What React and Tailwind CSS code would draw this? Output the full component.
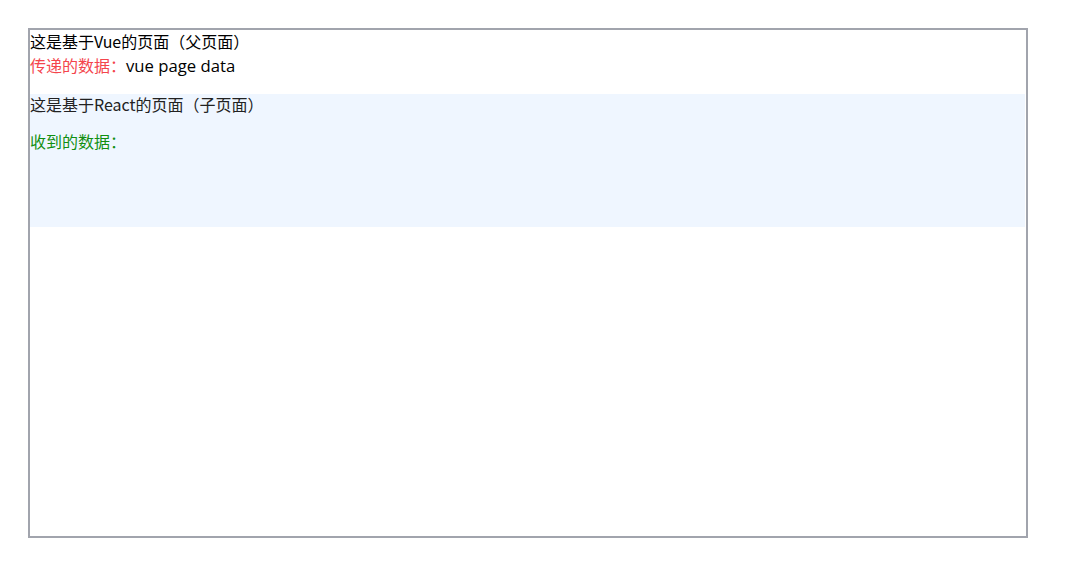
export default function App() {
  const cjk = { fontFamily: '"Microsoft YaHei", "Noto Sans CJK SC", "Noto Sans", sans-serif' };
  return (
    <div className="w-[1065px] h-[567px] bg-white p-[28px]">
      <div
        className="w-[1000px] h-[510px] border-2 border-[#a1a4ad] bg-white text-[16px] text-black"
        style={cjk}
      >
        <div className="mt-[1px] leading-[21px] h-[21px] whitespace-nowrap">这是基于Vue的页面（父页面）</div>
        <div className="leading-[21px] h-[21px] mt-[3px] flex items-end whitespace-nowrap">
          <span className="text-[#f4454c]">传递的数据：</span>
          <span className="text-[16.7px] leading-[21px] text-black" style={{ fontFamily: '"Open Sans", "Liberation Sans", sans-serif' }}>vue page data</span>
        </div>
        <div className="mt-[18px] h-[133px] w-[995px] bg-[#eff6ff]">
          <div className="leading-[21px] h-[21px] text-[#222] whitespace-nowrap">这是基于React的页面（子页面）</div>
          <div className="mt-[16px] leading-[21px] h-[21px] text-[#118f11] whitespace-nowrap">收到的数据：</div>
        </div>
      </div>
    </div>
  );
}
